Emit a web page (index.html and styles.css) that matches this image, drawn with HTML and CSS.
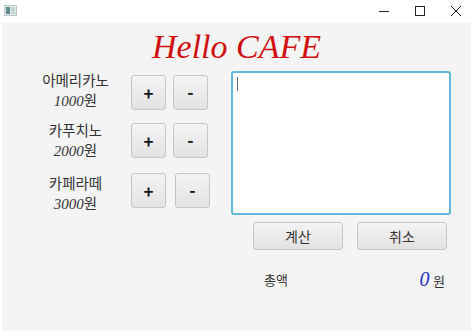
FILE: index.html
```html
<!DOCTYPE html>
<html lang="ko">
<head>
<meta charset="utf-8">
<link rel="stylesheet" href="styles.css">
</head>
<body>
<div class="window">
  <div class="titlebar">
    <svg class="app-icon" width="13" height="11" viewBox="0 0 13 11">
      <rect x="0.5" y="0.5" width="12" height="10" fill="#dfe7e7" stroke="#b9c7c9"/>
      <rect x="2" y="2" width="4" height="7" fill="#5f8f95"/>
      <rect x="7" y="2" width="4" height="7" fill="#c9d6d8"/>
    </svg>
    <div class="controls">
      <svg width="12" height="12" viewBox="0 0 12 12"><line x1="1" y1="6.5" x2="11" y2="6.5" stroke="#222" stroke-width="1"/></svg>
      <svg width="12" height="12" viewBox="0 0 12 12"><rect x="1.5" y="1.5" width="9" height="9" fill="none" stroke="#222" stroke-width="1"/></svg>
      <svg width="12" height="12" viewBox="0 0 12 12"><path d="M1 1 L11 11 M11 1 L1 11" stroke="#222" stroke-width="1"/></svg>
    </div>
  </div>
  <div class="content">
    <h1 class="title">Hello CAFE</h1>
    <div class="main">
      <div class="menu">
        <div class="item r1">
          <div class="label"><span class="name">아메리카노</span><span class="price"><i>1000</i>원</span></div>
          <button class="btn sq">+</button>
          <button class="btn sq">-</button>
        </div>
        <div class="item r2">
          <div class="label"><span class="name">카푸치노</span><span class="price"><i>2000</i>원</span></div>
          <button class="btn sq">+</button>
          <button class="btn sq">-</button>
        </div>
        <div class="item r3">
          <div class="label"><span class="name">카페라떼</span><span class="price"><i>3000</i>원</span></div>
          <button class="btn sq">+</button>
          <button class="btn sq alt">-</button>
        </div>
      </div>
      <div class="side">
        <div class="textarea"><span class="caret"></span></div>
        <div class="actions">
          <button class="btn wide">계산</button>
          <button class="btn wide">취소</button>
        </div>
        <div class="total">
          <span class="total-label">총액</span>
          <span class="total-value"><i>0</i> 원</span>
        </div>
      </div>
    </div>
  </div>
</div>
</body>
</html>
```
FILE: styles.css
```css
html, body {
  margin: 0;
  padding: 0;
  background: #ffffff;
}
.window {
  width: 474px;
  height: 336px;
  display: flex;
  flex-direction: column;
  background: #ffffff;
  font-family: "Noto Sans CJK KR", "Noto Sans", sans-serif;
  color: #333;
}
.titlebar {
  height: 23px;
  display: flex;
  align-items: center;
  justify-content: space-between;
  padding: 0 0 0 4px;
}
.app-icon {
  margin-top: -3px;
}
.controls {
  display: flex;
  gap: 24px;
  padding-right: 12px;
  margin-top: -2px;
}
.content {
  flex: 1;
  margin: 0 3px 5px 2px;
  background: #f4f4f4;
  display: flex;
  flex-direction: column;
}
.title {
  margin: 4px 0 0 0;
  font-family: "Liberation Serif", serif;
  font-style: italic;
  font-weight: normal;
  font-size: 34px;
  line-height: 40px;
  color: #d01010;
  text-align: center;
}
.main {
  display: flex;
  margin-top: 4px;
}
.menu {
  display: flex;
  flex-direction: column;
  gap: 13px;
  padding-left: 25px;
  padding-top: 4px;
}
.item {
  display: flex;
  align-items: center;
  gap: 7px;
  height: 35px;
}
.item.r3 {
  margin-top: 2px;
}
.label {
  width: 97px;
  display: flex;
  flex-direction: column;
  align-items: center;
}
.r1 .label {
  margin-bottom: 5px;
}
.r3 .label {
  margin-top: 6px;
}
.name {
  font-size: 14.5px;
  line-height: 20px;
  color: #333;
}
.price {
  font-size: 14.5px;
  line-height: 20px;
  color: #333;
}
.price i {
  font-family: "Liberation Serif", serif;
  font-size: 15px;
}
.btn {
  font-family: "Noto Sans CJK KR", "Noto Sans", sans-serif;
  background: linear-gradient(#f4f4f4, #e2e2e2);
  border: 1px solid #c6c6c6;
  border-radius: 3px;
  padding: 0;
  color: #222;
  cursor: default;
}
.sq {
  width: 35px;
  height: 35px;
  font-weight: bold;
  font-size: 17px;
  color: #111;
}
.sq.alt {
  margin-left: 2px;
}
.side {
  margin-left: 21px;
  display: flex;
  flex-direction: column;
}
.textarea {
  width: 216px;
  height: 140px;
  background: #fff;
  border: 2px solid #62b7db;
  border-radius: 3px;
  position: relative;
}
.caret {
  position: absolute;
  left: 4px;
  top: 4px;
  width: 1px;
  height: 14px;
  background: #666;
}
.actions {
  display: flex;
  gap: 14px;
  margin-top: 7px;
  padding-left: 22px;
}
.wide {
  width: 90px;
  height: 28px;
  font-size: 14px;
  color: #333;
}
.total {
  display: flex;
  align-items: center;
  justify-content: space-between;
  margin-top: 18px;
  padding-left: 33px;
  width: 181px;
  font-size: 13px;
  color: #333;
}
.total-value {
  font-size: 13px;
}
.total-value i {
  font-family: "Liberation Serif", serif;
  font-size: 20px;
  color: #1c2fc8;
}
```
